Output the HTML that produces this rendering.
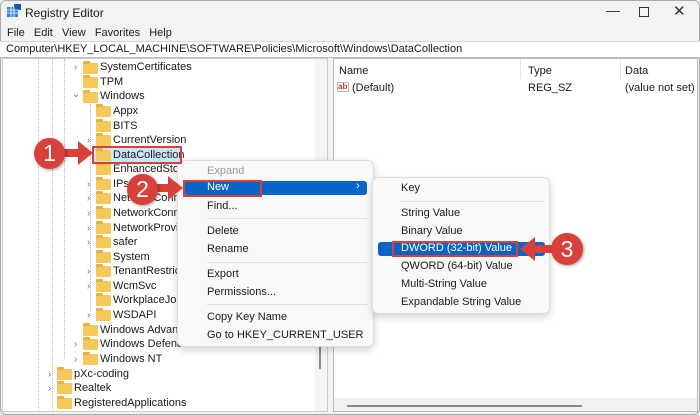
<!DOCTYPE html><html><head><style>
*{margin:0;padding:0;box-sizing:border-box}
body{width:700px;height:415px;overflow:hidden;background:#f3f3f3;font-family:"Liberation Sans",sans-serif;font-size:11px;color:#1a1a1a;position:relative}
.a{position:absolute;white-space:nowrap}
.f{position:absolute;width:15px;height:11px;background:#f6c85a;border-radius:1px}
.f:before{content:"";position:absolute;left:0;top:-2px;width:7px;height:3px;background:#e8b240;border-radius:1px 1px 0 0}
.ch{position:absolute;color:#777;font-size:10px}
.m{position:absolute;background:#f9f9f9;border:1px solid #ddd;border-radius:6px;box-shadow:0 3px 8px rgba(0,0,0,.18)}
.sep{position:absolute;height:1px;background:#e0e0e0}
.red{position:absolute;border:2px solid #d8403a}
.c{position:absolute;border-radius:50%;background:#d8403a;color:#fff;font-size:23px;text-align:center;box-shadow:1px 1px 3px rgba(0,0,0,.4)}
</style></head><body>
<div class="a" style="left:0;top:0;width:700px;height:415px;border:1px solid #aaa;border-radius:6px"></div>
<svg class="a" style="left:7px;top:4px" width="14" height="14"><rect x="0" y="3" width="11" height="10" fill="#2b88d8"/><rect x="7" y="0" width="7" height="6" fill="#0a5fb0"/><path d="M0 6h11M0 9h11M4 3v10M7 3v10" stroke="#fff" stroke-width=".8"/></svg>
<div class="a" style="left:25px;top:6px;font-size:12px">Registry Editor</div>
<div class="a" style="left:606px;top:2px;font-size:14px;color:#333">—</div>
<div class="a" style="left:639px;top:7px;width:10px;height:10px;border:1px solid #333"></div>
<div class="a" style="left:673px;top:2px;font-size:15px;color:#333">✕</div>
<div class="a" style="left:7px;top:27px">File&nbsp;&nbsp;&nbsp;Edit&nbsp;&nbsp;&nbsp;View&nbsp;&nbsp;&nbsp;Favorites&nbsp;&nbsp;&nbsp;Help</div>
<div class="a" style="left:0;top:41px;width:700px;height:17px;background:#fff;border-top:1px solid #d6d6d6;border-bottom:1px solid #bbb"></div>
<div class="a" style="left:6px;top:43px">Computer\HKEY_LOCAL_MACHINE\SOFTWARE\Policies\Microsoft\Windows\DataCollection</div>
<div class="a" style="left:2px;top:58px;width:326px;height:354px;background:#fff;border:1px solid #ccc"></div>
<div class="a" style="left:315px;top:59px;width:12px;height:352px;background:#f4f4f4"></div>
<div class="a" style="left:319px;top:345px;width:2px;height:24px;background:#888"></div>
<div class="a" style="left:333px;top:58px;width:365px;height:354px;background:#fff;border:1px solid #bbb"></div>
<div class="a" style="left:334px;top:398px;width:363px;height:13px;background:#f1f1f1"></div>
<div class="a" style="left:347px;top:405px;width:235px;height:2px;background:#888"></div>
<div class="a" style="left:339px;top:65px">Name</div><div class="a" style="left:528px;top:65px">Type</div><div class="a" style="left:625px;top:65px">Data</div>
<div class="a" style="left:520px;top:59px;width:1px;height:20px;background:#e5e5e5"></div><div class="a" style="left:620px;top:59px;width:1px;height:20px;background:#e5e5e5"></div>
<div class="a" style="left:337px;top:82px;width:12px;height:10px;border:1px solid #bbb;color:#c33;font-size:8px;line-height:8px;font-weight:bold">ab</div>
<div class="a" style="left:352px;top:82px">(Default)</div><div class="a" style="left:528px;top:82px">REG_SZ</div><div class="a" style="left:625px;top:82px">(value not set)</div>
<div class="a" style="left:38px;top:59px;height:353px;border-left:1px dotted #bbb"></div>
<div class="a" style="left:52px;top:59px;height:353px;border-left:1px dotted #bbb"></div>
<div class="a" style="left:64px;top:59px;height:300px;border-left:1px dotted #bbb"></div>
<div class="a" style="left:90px;top:104px;height:212px;border-left:1px dotted #bbb"></div>

<div class="ch" style="left:74px;top:62px">›</div><div class="f" style="left:83px;top:63px"></div><div class="a" style="left:100px;top:61px">SystemCertificates</div>
<div class="f" style="left:83px;top:77px"></div><div class="a" style="left:100px;top:76px">TPM</div>
<div class="ch" style="left:72px;top:89px">⌄</div><div class="f" style="left:83px;top:92px"></div><div class="a" style="left:100px;top:90px">Windows</div>
<div class="f" style="left:96px;top:106px"></div><div class="a" style="left:113px;top:105px">Appx</div>
<div class="f" style="left:96px;top:121px"></div><div class="a" style="left:113px;top:120px">BITS</div>
<div class="ch" style="left:87px;top:135px">›</div><div class="f" style="left:96px;top:135px"></div><div class="a" style="left:113px;top:134px">CurrentVersion</div>
<div class="a" style="left:93px;top:147px;width:88px;height:16px;background:#cce4f7"></div>
<div class="f" style="left:96px;top:150px"></div><div class="a" style="left:113px;top:149px">DataCollection</div>
<div class="f" style="left:96px;top:164px"></div><div class="a" style="left:113px;top:163px">EnhancedStora</div>
<div class="ch" style="left:87px;top:179px">›</div><div class="f" style="left:96px;top:179px"></div><div class="a" style="left:113px;top:178px">IPsec</div>
<div class="ch" style="left:87px;top:193px">›</div><div class="f" style="left:96px;top:193px"></div><div class="a" style="left:113px;top:192px">NetworkConn</div>
<div class="ch" style="left:87px;top:208px">›</div><div class="f" style="left:96px;top:208px"></div><div class="a" style="left:113px;top:207px">NetworkConne</div>
<div class="ch" style="left:87px;top:223px">›</div><div class="f" style="left:96px;top:223px"></div><div class="a" style="left:113px;top:222px">NetworkProvic</div>
<div class="ch" style="left:87px;top:237px">›</div><div class="f" style="left:96px;top:237px"></div><div class="a" style="left:113px;top:236px">safer</div>
<div class="f" style="left:96px;top:252px"></div><div class="a" style="left:113px;top:251px">System</div>
<div class="ch" style="left:87px;top:266px">›</div><div class="f" style="left:96px;top:266px"></div><div class="a" style="left:113px;top:265px">TenantRestricti</div>
<div class="ch" style="left:87px;top:281px">›</div><div class="f" style="left:96px;top:281px"></div><div class="a" style="left:113px;top:280px">WcmSvc</div>
<div class="f" style="left:96px;top:295px"></div><div class="a" style="left:113px;top:294px">WorkplaceJoin</div>
<div class="ch" style="left:87px;top:310px">›</div><div class="f" style="left:96px;top:310px"></div><div class="a" style="left:113px;top:309px">WSDAPI</div>
<div class="f" style="left:83px;top:325px"></div><div class="a" style="left:100px;top:324px">Windows Advanc</div>
<div class="ch" style="left:74px;top:339px">›</div><div class="f" style="left:83px;top:339px"></div><div class="a" style="left:100px;top:338px">Windows Defende</div>
<div class="ch" style="left:74px;top:354px">›</div><div class="f" style="left:83px;top:354px"></div><div class="a" style="left:100px;top:353px">Windows NT</div>
<div class="ch" style="left:48px;top:369px">›</div><div class="f" style="left:57px;top:369px"></div><div class="a" style="left:74px;top:368px">pXc-coding</div>
<div class="ch" style="left:48px;top:383px">›</div><div class="f" style="left:57px;top:383px"></div><div class="a" style="left:74px;top:382px">Realtek</div>
<div class="f" style="left:57px;top:398px"></div><div class="a" style="left:74px;top:397px">RegisteredApplications</div>

<div class="m" style="left:177px;top:160px;width:197px;height:187px"></div>
<div class="a" style="left:207px;top:165px;color:#999">Expand</div>
<div class="a" style="left:184px;top:181px;width:183px;height:14px;background:#0a64c8;border-radius:3px"></div>
<div class="a" style="left:207px;top:181px;color:#fff">New</div><div class="a" style="left:356px;top:180px;color:#fff">›</div>
<div class="a" style="left:207px;top:200px">Find...</div>
<div class="sep" style="left:207px;top:218px;width:160px"></div>
<div class="a" style="left:207px;top:225px">Delete</div>
<div class="a" style="left:207px;top:243px">Rename</div>
<div class="sep" style="left:207px;top:262px;width:160px"></div>
<div class="a" style="left:207px;top:268px">Export</div>
<div class="a" style="left:207px;top:286px">Permissions...</div>
<div class="sep" style="left:207px;top:304px;width:160px"></div>
<div class="a" style="left:207px;top:311px">Copy Key Name</div>
<div class="a" style="left:207px;top:329px">Go to HKEY_CURRENT_USER</div>

<div class="m" style="left:372px;top:177px;width:178px;height:137px"></div>
<div class="a" style="left:401px;top:182px">Key</div>
<div class="sep" style="left:400px;top:201px;width:144px"></div>
<div class="a" style="left:401px;top:207px">String Value</div>
<div class="a" style="left:401px;top:225px">Binary Value</div>
<div class="a" style="left:378px;top:242px;width:167px;height:14px;background:#0a64c8;border-radius:3px"></div>
<div class="a" style="left:401px;top:242px;color:#fff">DWORD (32-bit) Value</div>
<div class="a" style="left:401px;top:260px">QWORD (64-bit) Value</div>
<div class="a" style="left:401px;top:278px">Multi-String Value</div>
<div class="a" style="left:401px;top:296px">Expandable String Value</div>

<div class="red" style="left:92px;top:146px;width:90px;height:18px"></div>
<div class="red" style="left:183px;top:180px;width:79px;height:17px"></div>
<div class="red" style="left:392px;top:241px;width:126px;height:16px"></div>
<svg class="a" style="left:0;top:0" width="700" height="415">
<path d="M60 149h18v-8l15 12-15 12v-8h-18z" fill="#d8403a"/>
<path d="M152 184h16v-8l15 12-15 12v-8h-16z" fill="#d8403a"/>
<path d="M555 245h-20v-8l-15 12 15 12v-8h20z" fill="#d8403a"/>
</svg>
<div class="c" style="left:34px;top:138px;width:31px;height:31px;line-height:31px">1</div>
<div class="c" style="left:127px;top:174px;width:31px;height:31px;line-height:31px">2</div>
<div class="c" style="left:551px;top:233px;width:32px;height:32px;line-height:32px">3</div>
</body></html>
